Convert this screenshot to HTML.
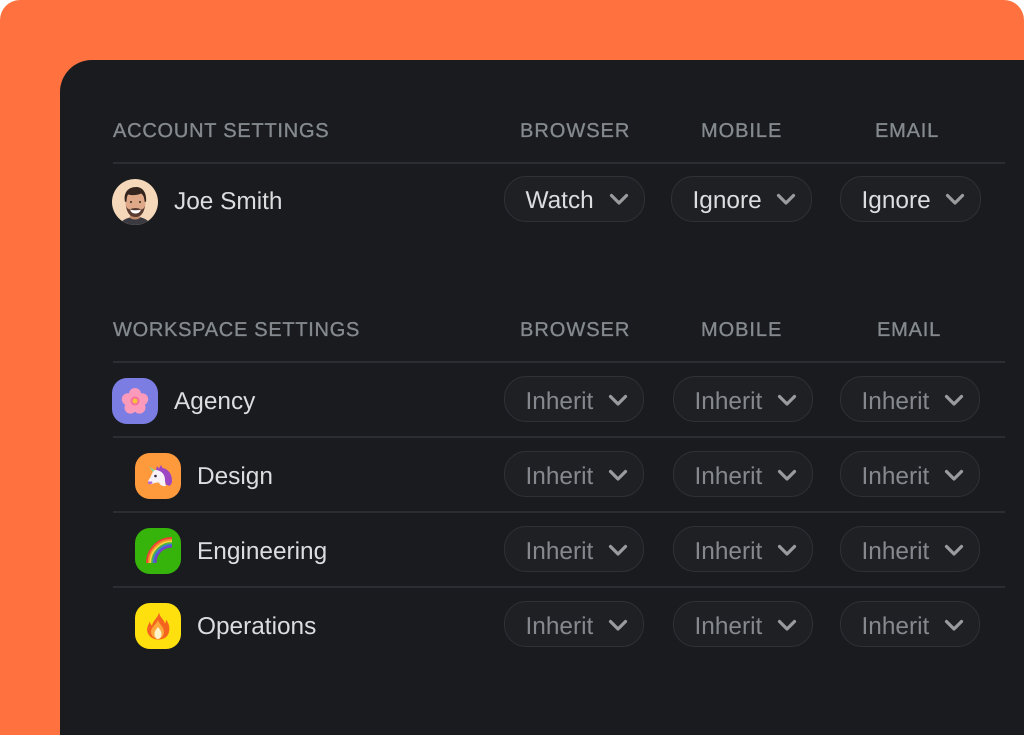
<!DOCTYPE html>
<html><head><meta charset="utf-8">
<style>
html,body{margin:0;padding:0;background:#fff}
#r{position:relative;width:1024px;height:735px;overflow:hidden;background:#ff7240;border-radius:20px 20px 0 0;font-family:"Liberation Sans",sans-serif;text-rendering:geometricPrecision}
#p{position:absolute;left:60px;top:60px;width:964px;height:675px;background:#191b1f;border-top-left-radius:32px}
.h{position:absolute;font-size:20px;line-height:24px;color:#858a8e;white-space:nowrap;-webkit-text-stroke:.35px #858a8e}
.l{position:absolute;left:113px;width:892px;height:1.5px;background:#2b2d32}
.n{position:absolute;font-size:24.4px;line-height:30px;color:#dcdddf;white-space:nowrap}
.b{position:absolute;box-sizing:border-box;width:141px;height:46px;border:1.5px solid #2f3136;border-radius:22px;background:#1e2024}
.b span{position:absolute;left:20.5px;top:8.5px;font-size:24.4px;line-height:30px;color:#dcdddf;white-space:nowrap}
.b.i{width:140px}
.b.i span{color:#85898e;top:9.5px}
.b svg{position:absolute;left:103.5px;top:14.5px}
.b.i svg{left:102.5px;top:15.5px}
.ic{position:absolute;width:46px;height:46px;border-radius:15px}
.ic svg{position:absolute;left:0;top:0}
</style></head><body>
<div id="r">
<div id="p"></div>

<div class="h" style="left:113px;top:119px;letter-spacing:.77px">ACCOUNT SETTINGS</div>
<div class="h" style="left:520px;top:119px;letter-spacing:1px">BROWSER</div>
<div class="h" style="left:701px;top:119px;letter-spacing:.95px">MOBILE</div>
<div class="h" style="left:875px;top:119px;letter-spacing:.8px">EMAIL</div>
<div class="l" style="top:162px"></div>

<svg style="position:absolute;left:112px;top:179px" width="46" height="46" viewBox="0 0 46 46">
<defs><clipPath id="c"><circle cx="23" cy="23" r="23"/></clipPath></defs>
<g clip-path="url(#c)">
<rect width="46" height="46" fill="#f5d8b9"/>
<path d="M8 46c1-5 7-7 12-8h7c5 1 10 3 11 8z" fill="#3a3a40"/>
<path d="M18 31h10v8c-3 2-7 2-10 0z" fill="#c08a68"/>
<ellipse cx="23.500" cy="24" rx="10" ry="13" fill="#dfa888"/>
<path d="M13 23c-2-9 3-15 11-15 7 0 11 6 10 15l-1.500-.5c0-4-1.500-7-3.500-8-4 2-9 2-13 1-1 2-1.500 4-1.500 7z" fill="#33241e"/>
<path d="M14 27c1 7 4 11 9.500 11S32 34 33 27c-1 2-2 3-3.500 3.500-4-2-8-2-12 0-1.500-.5-2.500-1.500-3.500-3.500z" fill="#5a3d30"/>
<path d="M18 30.500c3.500 1 7.500 1 11 0-1 3-3 4-5.500 4s-4.500-1-5.500-4z" fill="#fff"/>
<circle cx="19" cy="23" r="1" fill="#33241e"/><circle cx="28" cy="23" r="1" fill="#33241e"/>
</g></svg>
<div class="n" style="left:174px;top:187px">Joe Smith</div>

<div class="b" style="left:504px;top:176px"><span>Watch</span><svg width="20" height="16" viewBox="0 0 20 16"><path d="M2.500 3.500 10 11l7.500-7.500" fill="none" stroke="#9a9b9d" stroke-width="3.200" stroke-linecap="round" stroke-linejoin="round"/></svg></div>
<div class="b" style="left:671px;top:176px"><span>Ignore</span><svg width="20" height="16" viewBox="0 0 20 16"><path d="M2.500 3.500 10 11l7.500-7.500" fill="none" stroke="#9a9b9d" stroke-width="3.200" stroke-linecap="round" stroke-linejoin="round"/></svg></div>
<div class="b" style="left:840px;top:176px"><span>Ignore</span><svg width="20" height="16" viewBox="0 0 20 16"><path d="M2.500 3.500 10 11l7.500-7.500" fill="none" stroke="#9a9b9d" stroke-width="3.200" stroke-linecap="round" stroke-linejoin="round"/></svg></div>

<div class="h" style="left:113px;top:318px;letter-spacing:.72px">WORKSPACE SETTINGS</div>
<div class="h" style="left:520px;top:318px;letter-spacing:1px">BROWSER</div>
<div class="h" style="left:701px;top:318px;letter-spacing:.95px">MOBILE</div>
<div class="h" style="left:877px;top:318px;letter-spacing:.8px">EMAIL</div>
<div class="l" style="top:361px"></div>
<div class="l" style="top:436px"></div>
<div class="l" style="top:511px"></div>
<div class="l" style="top:586px"></div>

<div class="ic" style="left:112px;top:378px;background:#7b7de3"><svg width="46" height="46" viewBox="0 0 46 46">
<g fill="#fb9abb"><circle cx="23" cy="16" r="6"/><circle cx="30.200" cy="21.200" r="6"/><circle cx="27.500" cy="29.600" r="6"/><circle cx="18.500" cy="29.600" r="6"/><circle cx="15.800" cy="21.200" r="6"/></g>
<circle cx="23" cy="23" r="4.500" fill="#f76f9c"/><circle cx="23" cy="23" r="2.500" fill="#f7c33e"/></svg></div>
<div class="n" style="left:174px;top:387px">Agency</div>

<div class="ic" style="left:135px;top:453px;background:#ff9a3c"><svg width="46" height="46" viewBox="0 0 46 46">
<path d="M14 13.500 21.500 18l-2.500 2.500z" fill="#8fd49a"/>
<path d="M21 17l1-4 2 2.500L26 12l1.500 3c6 1 9.500 6 9.500 13 0 2-1 4-3 5-1-1-2-1.500-3-1-1-5-3-12-10-15z" fill="#9c46c4"/>
<path d="M20 17c6 0 10 4 10 10 0 3 .5 4 1 6-3 .5-6-.5-7-3.500-3 0-5 .5-7 1.500-2 .5-4 0-4-2 0-1.500 1-2.500 2-4 1.500-2.500 2-6 5-8z" fill="#f6f2f7"/>
<path d="M13 28.500c-.5 1.500.5 3 2.500 2.700l2-1-.5-1.700z" fill="#b06ad8"/><circle cx="20.500" cy="23" r="1.300" fill="#33283d"/></svg></div>
<div class="n" style="left:197px;top:462px">Design</div>

<div class="ic" style="left:135px;top:528px;background:#37b40c"><svg width="46" height="46" viewBox="0 0 46 46" fill="none" stroke-width="1.900">
<path d="M12 35A25 25 0 0 1 37 10" stroke="#ef4136"/>
<path d="M13.700 35A23.300 23.300 0 0 1 37 11.700" stroke="#f68b2a"/>
<path d="M15.400 35A21.600 21.600 0 0 1 37 13.400" stroke="#f9d43b"/>
<path d="M17.100 35A19.900 19.900 0 0 1 37 15.100" stroke="#4caf50"/>
<path d="M18.800 35A18.200 18.200 0 0 1 37 16.800" stroke="#3f6fd8"/>
<path d="M20.500 35A16.500 16.500 0 0 1 37 18.500" stroke="#7b3fc4"/></svg></div>
<div class="n" style="left:197px;top:537px">Engineering</div>

<div class="ic" style="left:135px;top:603px;background:#ffe00f"><svg width="46" height="46" viewBox="0 0 46 46">
<path d="M24 9.500c1 5 5 7 6 11 1-1 1-3 1-4 3 4 4 8 3 12-1 6-6 8-11 8s-10-3-11-9c0-4 2-7 3-9 0 2 1 3 2 4 1-5 6-8 7-13z" fill="#f5641e"/>
<path d="M23 17c1 4 6 7 6 12 0 4-3 7-6 7s-7-3-7-7c0-5 5-7 7-12z" fill="#fca83a"/>
<path d="M23 24c1.500 2 3.500 4 3.500 7s-1.800 5-3.500 5-3.500-2-3.500-5 2-5 3.500-7z" fill="#fff3c9"/></svg></div>
<div class="n" style="left:197px;top:612px">Operations</div>

<div class="b i" style="left:504px;top:376px"><span>Inherit</span><svg width="20" height="16" viewBox="0 0 20 16"><path d="M2.500 3.500 10 11l7.500-7.500" fill="none" stroke="#9a9b9d" stroke-width="3.200" stroke-linecap="round" stroke-linejoin="round"/></svg></div>
<div class="b i" style="left:673px;top:376px"><span>Inherit</span><svg width="20" height="16" viewBox="0 0 20 16"><path d="M2.500 3.500 10 11l7.500-7.500" fill="none" stroke="#9a9b9d" stroke-width="3.200" stroke-linecap="round" stroke-linejoin="round"/></svg></div>
<div class="b i" style="left:840px;top:376px"><span>Inherit</span><svg width="20" height="16" viewBox="0 0 20 16"><path d="M2.500 3.500 10 11l7.500-7.500" fill="none" stroke="#9a9b9d" stroke-width="3.200" stroke-linecap="round" stroke-linejoin="round"/></svg></div>

<div class="b i" style="left:504px;top:451px"><span>Inherit</span><svg width="20" height="16" viewBox="0 0 20 16"><path d="M2.500 3.500 10 11l7.500-7.500" fill="none" stroke="#9a9b9d" stroke-width="3.200" stroke-linecap="round" stroke-linejoin="round"/></svg></div>
<div class="b i" style="left:673px;top:451px"><span>Inherit</span><svg width="20" height="16" viewBox="0 0 20 16"><path d="M2.500 3.500 10 11l7.500-7.500" fill="none" stroke="#9a9b9d" stroke-width="3.200" stroke-linecap="round" stroke-linejoin="round"/></svg></div>
<div class="b i" style="left:840px;top:451px"><span>Inherit</span><svg width="20" height="16" viewBox="0 0 20 16"><path d="M2.500 3.500 10 11l7.500-7.500" fill="none" stroke="#9a9b9d" stroke-width="3.200" stroke-linecap="round" stroke-linejoin="round"/></svg></div>

<div class="b i" style="left:504px;top:526px"><span>Inherit</span><svg width="20" height="16" viewBox="0 0 20 16"><path d="M2.500 3.500 10 11l7.500-7.500" fill="none" stroke="#9a9b9d" stroke-width="3.200" stroke-linecap="round" stroke-linejoin="round"/></svg></div>
<div class="b i" style="left:673px;top:526px"><span>Inherit</span><svg width="20" height="16" viewBox="0 0 20 16"><path d="M2.500 3.500 10 11l7.500-7.500" fill="none" stroke="#9a9b9d" stroke-width="3.200" stroke-linecap="round" stroke-linejoin="round"/></svg></div>
<div class="b i" style="left:840px;top:526px"><span>Inherit</span><svg width="20" height="16" viewBox="0 0 20 16"><path d="M2.500 3.500 10 11l7.500-7.500" fill="none" stroke="#9a9b9d" stroke-width="3.200" stroke-linecap="round" stroke-linejoin="round"/></svg></div>

<div class="b i" style="left:504px;top:601px"><span>Inherit</span><svg width="20" height="16" viewBox="0 0 20 16"><path d="M2.500 3.500 10 11l7.500-7.500" fill="none" stroke="#9a9b9d" stroke-width="3.200" stroke-linecap="round" stroke-linejoin="round"/></svg></div>
<div class="b i" style="left:673px;top:601px"><span>Inherit</span><svg width="20" height="16" viewBox="0 0 20 16"><path d="M2.500 3.500 10 11l7.500-7.500" fill="none" stroke="#9a9b9d" stroke-width="3.200" stroke-linecap="round" stroke-linejoin="round"/></svg></div>
<div class="b i" style="left:840px;top:601px"><span>Inherit</span><svg width="20" height="16" viewBox="0 0 20 16"><path d="M2.500 3.500 10 11l7.500-7.500" fill="none" stroke="#9a9b9d" stroke-width="3.200" stroke-linecap="round" stroke-linejoin="round"/></svg></div>
</div>
</body></html>
